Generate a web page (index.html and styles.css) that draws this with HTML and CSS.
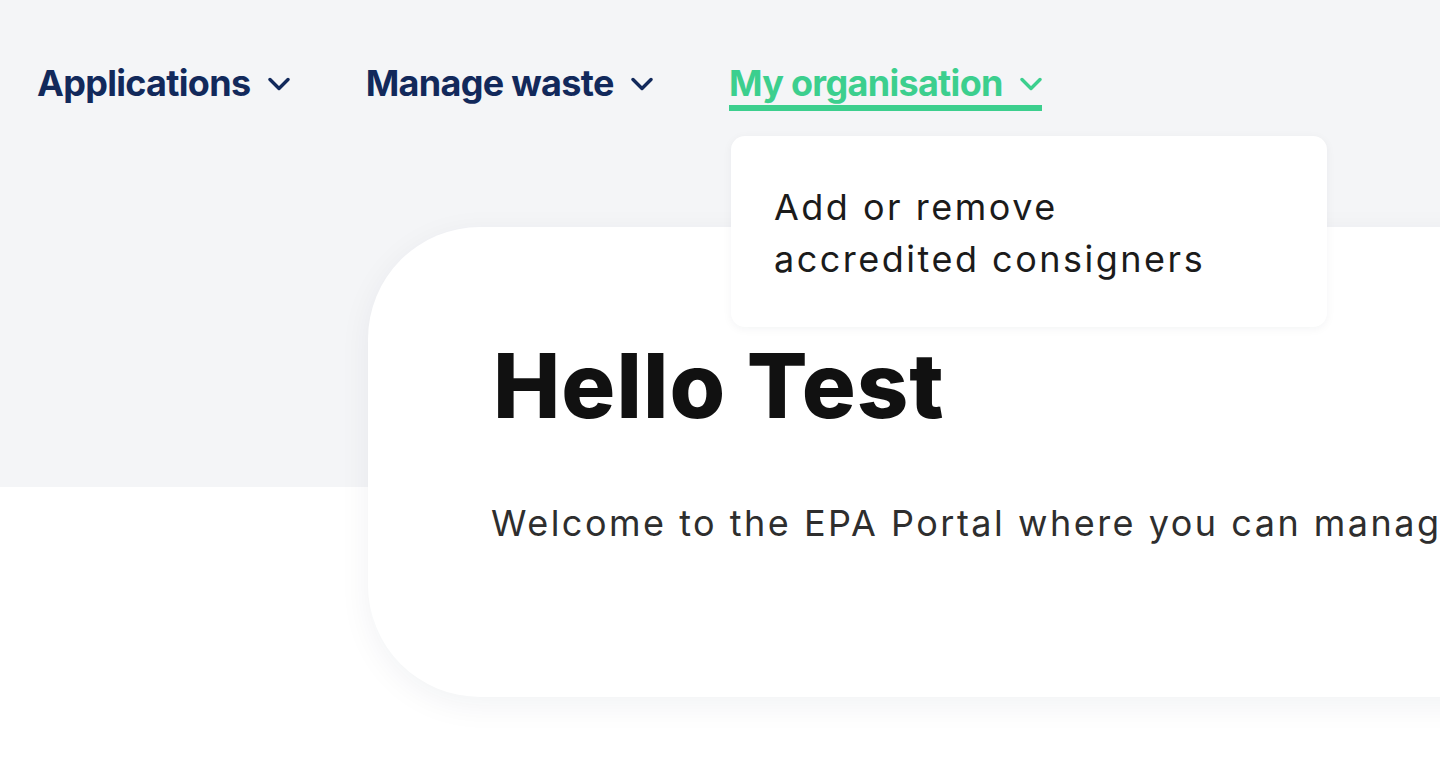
FILE: index.html
```html
<!DOCTYPE html>
<html lang="en">
<head>
<meta charset="utf-8">
<title>EPA Portal</title>
<link rel="stylesheet" href="styles.css">
</head>
<body>
<header class="hero">
  <nav class="nav">
    <div class="nav-item">
      <span class="nav-label">Applications</span>
      <svg class="chev" viewBox="0 0 22 14" aria-hidden="true"><path d="M2 2.5 L11 11.5 L20 2.5"/></svg>
    </div>
    <div class="nav-item">
      <span class="nav-label">Manage waste</span>
      <svg class="chev" viewBox="0 0 22 14" aria-hidden="true"><path d="M2 2.5 L11 11.5 L20 2.5"/></svg>
    </div>
    <div class="nav-item is-active">
      <span class="nav-label">My organisation</span>
      <svg class="chev" viewBox="0 0 22 14" aria-hidden="true"><path d="M2 2.5 L11 11.5 L20 2.5"/></svg>
      <div class="dropdown">
        <a class="dropdown-link" href="#">Add or remove accredited consigners</a>
      </div>
    </div>
  </nav>
</header>
<main class="main">
  <section class="card">
    <h1 class="title">Hello Test</h1>
    <p class="intro">Welcome to the EPA Portal where you can manage your applications and waste.</p>
  </section>
</main>
</body>
</html>
```
FILE: styles.css
```css
html, body {
  margin: 0;
  padding: 0;
  overflow: hidden;
  background: #ffffff;
}
body {
  font-family: "Inter", "Liberation Sans", sans-serif;
  width: 1440px;
  height: 760px;
}
.hero {
  background: #f4f5f7;
  height: 487px;
}
.nav {
  display: flex;
  gap: 76px;
  padding: 61px 0 0 37px;
}
.nav-item {
  position: relative;
  display: flex;
  align-items: center;
  gap: 18px;
  height: 44px;
  border-bottom: 6px solid transparent;
  color: #12295b;
}
.nav-label {
  font-size: 36px;
  font-weight: 700;
  line-height: 44px;
  letter-spacing: -0.7px;
  margin-right: -0.7px;
}
.chev {
  width: 22px;
  height: 14px;
  margin-top: 2px;
  fill: none;
  stroke: currentColor;
  stroke-width: 3.4;
  stroke-linecap: round;
  stroke-linejoin: round;
}
.nav-item.is-active {
  color: #3ccf8e;
  border-bottom-color: #3ccf8e;
}
.dropdown {
  position: absolute;
  z-index: 10;
  left: 2px;
  top: 75px;
  width: 596px;
  box-sizing: border-box;
  padding: 45px 43px 42px;
  background: #ffffff;
  border-radius: 14px;
  box-shadow: 0 2px 10px rgba(20, 30, 60, 0.05);
}
.dropdown-link {
  display: block;
  max-width: 450px;
  font-size: 36px;
  line-height: 52px;
  letter-spacing: 2.5px;
  color: #1b1b1b;
  text-decoration: none;
}
.main {
  position: relative;
  z-index: 1;
  margin-top: -260px;
  padding-left: 368px;
}
.card {
  width: 1300px;
  box-sizing: border-box;
  padding: 105px 0 148px 125px;
  background: #ffffff;
  border-radius: 112px;
  box-shadow: 0 8px 32px rgba(20, 30, 60, 0.06);
}
.title {
  margin: 0;
  font-size: 90px;
  font-weight: 800;
  line-height: 108px;
  letter-spacing: 1px;
  color: #111111;
}
.intro {
  margin: 57px 0 0 -2px;
  font-size: 36px;
  line-height: 52px;
  letter-spacing: 2.5px;
  color: #2e2e2e;
  white-space: nowrap;
}
```
